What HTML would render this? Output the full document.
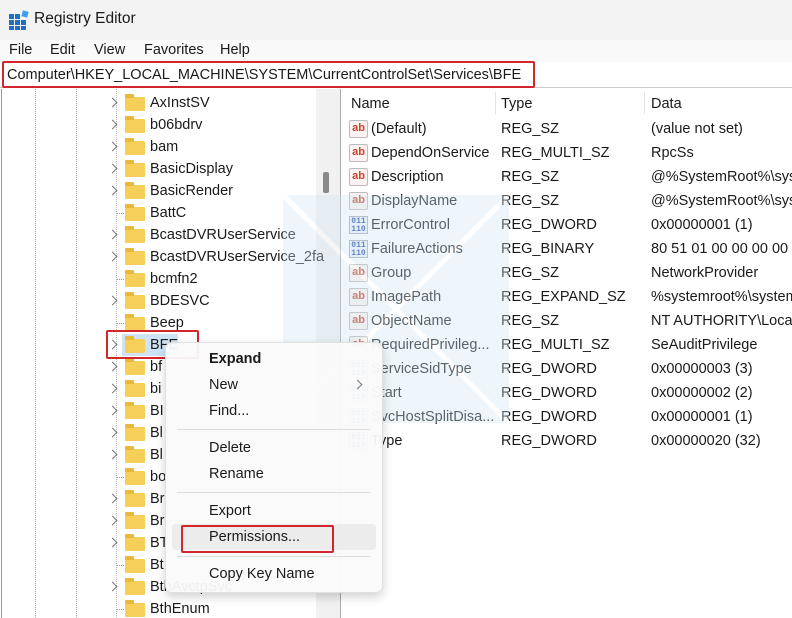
<!DOCTYPE html>
<html style="overflow:hidden"><head><style>
*{margin:0;padding:0;box-sizing:border-box}
html,body{width:792px;height:618px;overflow:hidden}
body{background:#fff;font-family:"Segoe UI","Liberation Sans",sans-serif;font-size:14.5px;line-height:18px;color:#1a1a1a;position:relative}
.a{position:absolute;white-space:nowrap}
.fold{position:absolute;width:20px;height:14px;background:#f6cf5a;border-radius:1px}
.fold:before{content:"";position:absolute;left:0;top:-3px;width:9px;height:4px;background:#e9b93c;border-radius:1px 1px 0 0}
.chev{position:absolute;width:7px;height:7px;border-right:1.5px solid #777;border-top:1.5px solid #777;transform:rotate(45deg)}
.ab{position:absolute;width:19px;height:18px;border:1px solid #bbb;background:#fdf3f0;font:bold 11px "Liberation Sans",sans-serif;color:#c8452a;line-height:14px;text-align:center;border-radius:2px}
.bin{position:absolute;width:19px;height:18px;border:1px solid #aab;background:#eef2fb;font:bold 8px "Liberation Mono",monospace;color:#2b4fa8;line-height:8px;text-align:center;padding-top:1px}
.mi{position:absolute;left:209px;font-size:14.5px}
.sep{position:absolute;left:177px;width:193px;height:1px;background:#ddd}
</style></head><body>
<div class="a" style="left:0;top:0;width:792px;height:40px;background:#f3f3f3"></div>
<svg class="a" style="left:9px;top:10px" width="20" height="20"><g fill="#1f6fc5"><rect x="0" y="4" width="5" height="5"/><rect x="6" y="4" width="5" height="5"/><rect x="0" y="10" width="5" height="5"/><rect x="6" y="10" width="5" height="5"/><rect x="12" y="10" width="5" height="5"/><rect x="0" y="16" width="5" height="4"/><rect x="6" y="16" width="5" height="4"/><rect x="12" y="16" width="5" height="4"/></g><rect x="13" y="1" width="6" height="6" fill="#3ea0e8" transform="rotate(15 16 4)"/></svg>
<div class="a" style="left:34px;top:10px;font-size:15.5px">Registry Editor</div>
<div class="a" style="left:0;top:40px;width:792px;height:22px;background:#f9f9f9"></div>
<div class="a" style="left:9px;top:41px">File</div>
<div class="a" style="left:50px;top:41px">Edit</div>
<div class="a" style="left:94px;top:41px">View</div>
<div class="a" style="left:144px;top:41px">Favorites</div>
<div class="a" style="left:220px;top:41px">Help</div>
<div class="a" style="left:0;top:62px;width:792px;height:26px;background:#fff;border-bottom:1px solid #ccc"></div>
<div class="a" style="left:2px;top:61px;width:533px;height:27px;border:2.5px solid #d0262c;border-radius:2px"></div>
<div class="a" style="left:7px;top:66px;font-size:14.5px">Computer\HKEY_LOCAL_MACHINE\SYSTEM\CurrentControlSet\Services\BFE</div>
<div class="a" style="left:1px;top:89px;width:1px;height:529px;background:#999"></div>
<div class="a" style="left:35px;top:89px;height:529px;border-left:1px dotted #999"></div>
<div class="a" style="left:76px;top:89px;height:529px;border-left:1px dotted #999"></div>
<div class="a" style="left:116px;top:89px;height:529px;border-left:1px dotted #bbb"></div>
<div class="a" style="left:316px;top:89px;width:24px;height:529px;background:#f1f1f1"></div>
<div class="a" style="left:323px;top:172px;width:6px;height:21px;background:#8a8a8a;border-radius:2px"></div>
<div class="a" style="left:340px;top:89px;width:1px;height:529px;background:#aaa"></div>
<div class="a" style="left:122px;top:334px;width:56px;height:22px;background:#cfe3f7"></div>
<div id="tree"></div>
<div class="a" style="left:351px;top:95px">Name</div>
<div class="a" style="left:495px;top:92px;width:1px;height:22px;background:#e5e5e5"></div>
<div class="a" style="left:501px;top:95px">Type</div>
<div class="a" style="left:644px;top:92px;width:1px;height:22px;background:#e5e5e5"></div>
<div class="a" style="left:651px;top:95px">Data</div>
<div id="list"></div>
<svg class="a" style="left:283px;top:195px;opacity:.35" width="226" height="228"><rect width="226" height="228" fill="#cfe8f6"/><path d="M0 0L226 228M226 0L0 228" stroke="#fff" stroke-width="5"/></svg>
<div class="a" style="left:106px;top:330px;width:93px;height:29px;border:2.5px solid #d0262c;border-radius:2px"></div>
<div class="a" style="left:165px;top:342px;width:218px;height:251px;background:rgba(250,250,250,.95);border:1px solid #e0e0e0;border-radius:7px;box-shadow:0 4px 10px rgba(0,0,0,.18)"></div>
<div class="mi" style="top:350px;font-weight:bold">Expand</div>
<div class="mi" style="top:376px">New</div>
<div class="chev" style="left:354px;top:381px"></div>
<div class="mi" style="top:402px">Find...</div>
<div class="sep" style="top:429px"></div>
<div class="mi" style="top:439px">Delete</div>
<div class="mi" style="top:465px">Rename</div>
<div class="sep" style="top:492px"></div>
<div class="mi" style="top:502px">Export</div>
<div class="a" style="left:172px;top:524px;width:204px;height:26px;background:#ececec;border-radius:4px"></div>
<div class="mi" style="top:528px">Permissions...</div>
<div class="a" style="left:181px;top:525px;width:153px;height:28px;border:2.5px solid #d0262c;border-radius:2px"></div>
<div class="sep" style="top:556px"></div>
<div class="mi" style="top:565px">Copy Key Name</div>
<script>
var t=[["AxInstSV",1],["b06bdrv",1],["bam",1],["BasicDisplay",1],["BasicRender",1],["BattC",0],["BcastDVRUserService",1],["BcastDVRUserService_2fa",1],["bcmfn2",0],["BDESVC",1],["Beep",0],["BFE",1],["bf",1],["bi",1],["BI",1],["Bl",1],["Bl",1],["bo",0],["Br",1],["Br",1],["BT",1],["Bt",0],["BthAvctpSvc",1],["BthEnum",0]];
var h="";t.forEach(function(r,i){var c=103+22*i;
if(r[1])h+='<div class="chev" style="left:109px;top:'+(c-4)+'px"></div>';else h+='<div class="a" style="left:117px;top:'+c+'px;width:7px;border-top:1px dotted #999"></div>';
h+='<div class="fold" style="left:125px;top:'+(c-6)+'px"></div><div class="a" style="left:150px;top:'+(c-9)+'px">'+r[0]+'</div>';});
document.getElementById("tree").innerHTML=h;
var l=[["(Default)","REG_SZ","(value not set)",0],["DependOnService","REG_MULTI_SZ","RpcSs",0],["Description","REG_SZ","@%SystemRoot%\\system32",0],["DisplayName","REG_SZ","@%SystemRoot%\\system32",0],["ErrorControl","REG_DWORD","0x00000001 (1)",1],["FailureActions","REG_BINARY","80 51 01 00 00 00 00 00",1],["Group","REG_SZ","NetworkProvider",0],["ImagePath","REG_EXPAND_SZ","%systemroot%\\system32",0],["ObjectName","REG_SZ","NT AUTHORITY\\LocalService",0],["RequiredPrivileg...","REG_MULTI_SZ","SeAuditPrivilege",0],["ServiceSidType","REG_DWORD","0x00000003 (3)",1],["Start","REG_DWORD","0x00000002 (2)",1],["SvcHostSplitDisa...","REG_DWORD","0x00000001 (1)",1],["Type","REG_DWORD","0x00000020 (32)",1]];
h="";l.forEach(function(r,i){var y=120+24*i;
h+=r[3]?'<div class="bin" style="left:349px;top:'+y+'px">011<br>110</div>':'<div class="ab" style="left:349px;top:'+y+'px">ab</div>';
h+='<div class="a" style="left:371px;top:'+y+'px">'+r[0]+'</div><div class="a" style="left:501px;top:'+y+'px">'+r[1]+'</div><div class="a" style="left:651px;top:'+y+'px;max-width:141px;overflow:hidden">'+r[2]+'</div>';});
document.getElementById("list").innerHTML=h;
</script>
</body></html>
